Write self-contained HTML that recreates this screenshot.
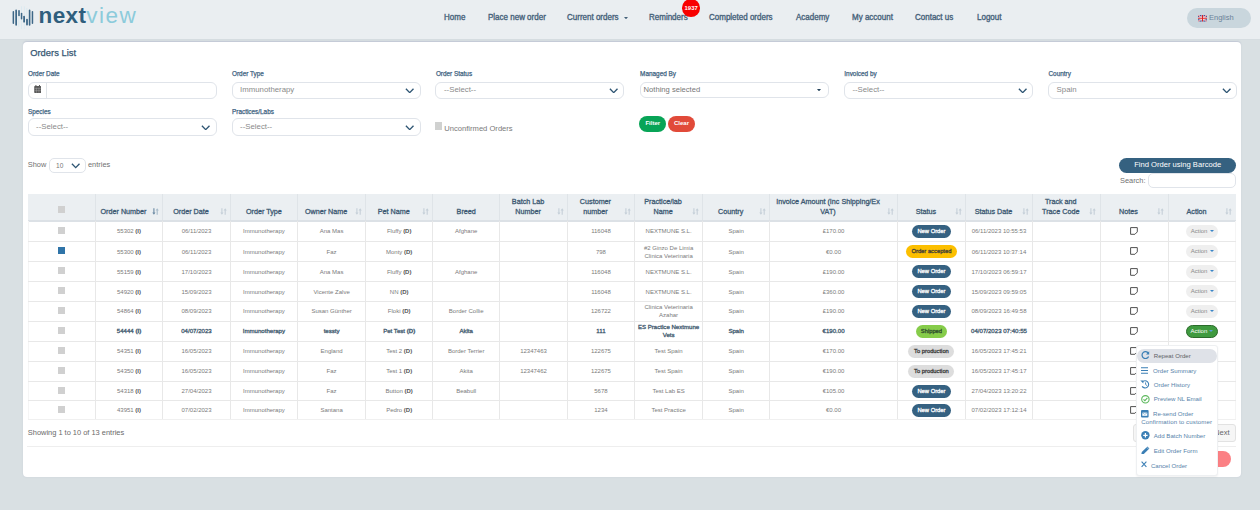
<!DOCTYPE html>
<html><head><meta charset="utf-8">
<style>
*{box-sizing:border-box;margin:0;padding:0}
html,body{width:1260px;height:510px;overflow:hidden}
body{background:#d9e0e3;font-family:"Liberation Sans",sans-serif;position:relative;color:#3b5a72}
.a{position:absolute;white-space:nowrap}
.hdr{position:absolute;left:0;top:0;width:1260px;height:39px;background:#eaeef1}
.nav{position:absolute;top:13.2px;font-size:8.4px;font-weight:normal;color:#46627a;line-height:9px;-webkit-text-stroke:0.35px #46627a;transform:scaleX(0.955);transform-origin:0 0}
.card{position:absolute;left:23px;top:42px;width:1218px;height:435px;background:#fff;border-radius:4px;box-shadow:0 -0.5px 1.5px rgba(90,90,150,0.18)}
.lbl{position:absolute;font-size:6.4px;font-weight:normal;color:#3f6482;line-height:7px;-webkit-text-stroke:0.25px #3f6482}
.inp{position:absolute;height:16.5px;border:1.2px solid #e0e4ea;border-radius:6px;background:#fff}
.sel .t{position:absolute;left:7.6px;top:0;font-size:7.8px;color:#8a8a8a;line-height:14.5px}
.chev{position:absolute;right:4.8px;top:5.4px;width:9.4px;height:5.5px}
table.g{position:absolute;left:5px;top:152px;border-collapse:collapse;table-layout:fixed;width:1208px}
table.g th{background:#ebeff2;height:27px;font-size:7px;font-weight:bold;color:#3d5a73;border-left:1px solid #e2e6ea;border-bottom:2px solid #d8dde2;text-align:center;vertical-align:bottom;padding:0 0 6px 0;line-height:8px;position:relative}
table.g th:first-child{border-left:none}
table.g td{height:20px;font-size:6px;color:#7b7b7b;border-left:1px solid #e6e6e6;border-bottom:1px solid #e6e6e6;text-align:center;vertical-align:middle;line-height:8px;padding:0}
table.g td:first-child{border-left:none}
.cb{display:inline-block;width:7px;height:7px;background:#cfcfcf;vertical-align:middle}
.srt{position:absolute;right:6px;bottom:7px;width:7px;height:7px}
.hd{display:flex;align-items:flex-end;justify-content:center;text-align:center;font-size:7.2px;font-weight:normal;color:#3d5a73;line-height:9.5px;white-space:normal;-webkit-text-stroke:0.3px #3d5a73}
.cl{display:flex;align-items:center;justify-content:center;text-align:center;font-size:6px;color:#7b7b7b;line-height:8px;white-space:normal}
.cl b{color:#555}
.cl.b{font-weight:normal;color:#465d72;font-size:6.1px;-webkit-text-stroke:0.32px #465d72}
.cl.b b{color:#465d72}
.bdg{border-radius:7px;font-size:5.8px;font-weight:normal;text-align:center;line-height:13px;-webkit-text-stroke:0.28px currentColor}
.act{border-radius:7px;font-size:6px;text-align:center;line-height:13px}
.car{display:inline-block;border-left:2px solid transparent;border-right:2px solid transparent;border-top:2.3px solid #3a86c8;vertical-align:middle;margin-top:-1px;margin-left:0.5px}
.mi{font-size:6.1px;line-height:8px;color:#5783aa}
</style></head><body>
<div class="hdr">
  <!-- logo -->
  <svg class="a" style="left:0;top:0" width="40" height="32" viewBox="0 0 40 32"><g stroke="#cfe6ee" stroke-width="0.5"><path d="M21.5 6.3V29M24.4 6.3V29M18.7 16.8V27M26.8 8V18.8"/></g><g fill="#3d6787"><rect x="12.6" y="11.1" width="1.5" height="12.8" rx="0.75"/><rect x="15.3" y="9.6" width="1.7" height="16.1" rx="0.85"/><rect x="18.2" y="9.9" width="1.6" height="6.3" rx="0.8"/><rect x="20.8" y="12.7" width="1.5" height="6.9" rx="0.75"/><rect x="23.2" y="15.7" width="1.8" height="6.9" rx="0.9"/><rect x="26.1" y="18.8" width="1.8" height="6.6" rx="0.9"/><rect x="28.8" y="9.6" width="1.6" height="16.1" rx="0.8"/><rect x="31.7" y="11.1" width="1.5" height="12.8" rx="0.75"/></g></svg>
  <div class="a" style="left:38.6px;top:1.2px;font-size:22.5px;line-height:30px;font-weight:bold;color:#2f5e7d;letter-spacing:0.35px">next<span style="font-weight:normal;color:#8ccbdb;letter-spacing:1.45px">view</span></div>

  <div class="nav a" style="left:444px">Home</div>
  <div class="nav a" style="left:488px">Place new order</div>
  <div class="nav a" style="left:567px">Current orders</div><svg class="a" style="left:623.8px;top:16.6px" width="4" height="2.4" viewBox="0 0 4 2.4"><path d="M0 0H4L2 2.3Z" fill="#46627a"/></svg>
  <div class="nav a" style="left:649px">Reminders</div>
  <div class="a" style="left:682px;top:-1px;width:18.3px;height:17.6px;border-radius:50%;background:#f80000;color:#fff;font-size:5.9px;font-weight:bold;text-align:center;line-height:18.5px">1937</div>
  <div class="nav a" style="left:709px">Completed orders</div>
  <div class="nav a" style="left:796px">Academy</div>
  <div class="nav a" style="left:852px">My account</div>
  <div class="nav a" style="left:915px">Contact us</div>
  <div class="nav a" style="left:977px">Logout</div>
  <div class="a" style="left:1187px;top:7.5px;width:64px;height:20px;border-radius:10px;background:#c9d6dd"></div>
  <svg class="a" style="left:1198px;top:15px" width="9" height="6.5" viewBox="0 0 9 6.5"><rect width="9" height="6.5" fill="#2b3f8c"/><path d="M0 0L9 6.5M9 0L0 6.5" stroke="#fff" stroke-width="1.4"/><path d="M0 0L9 6.5M9 0L0 6.5" stroke="#d22" stroke-width="0.5"/><path d="M4.5 0V6.5M0 3.25H9" stroke="#fff" stroke-width="2"/><path d="M4.5 0V6.5M0 3.25H9" stroke="#d22" stroke-width="1.1"/></svg>
  <div class="a" style="left:1209px;top:12.7px;font-size:7.5px;color:#6a8298;line-height:9px">English</div>
</div>
<div class="a" style="left:0;top:39px;width:1260px;height:1px;background:#d6dde1"></div>

<div class="card">
  <div class="a" style="left:7.2px;top:5px;font-size:9.4px;color:#355672;line-height:12px;-webkit-text-stroke:0.25px #355672">Orders List</div>
<!--FILT-->
<div class="lbl" style="left:5.0px;top:28.3px">Order Date</div>
<div class="inp" style="left:4.5px;top:39.5px;width:189.5px;height:17px"><div style="position:absolute;left:0;top:0;width:18.3px;height:100%;border-right:1.2px solid #e0e4e8"></div><svg style="position:absolute;left:5.6px;top:2.6px" width="7.4" height="8" viewBox="0 0 7.4 8"><rect x="0.2" y="1" width="7" height="7" rx="0.8" fill="#5a5a5a"/><path d="M0.5 3.4H6.9M0.5 5.6H6.9M2.5 2.6V7.8M4.9 2.6V7.8" stroke="#a8a8a8" stroke-width="0.45"/><rect x="1.4" y="0" width="1" height="1.8" fill="#5a5a5a"/><rect x="5" y="0" width="1" height="1.8" fill="#5a5a5a"/></svg></div>
<div class="lbl" style="left:209.0px;top:28.3px">Order Type</div>
<div class="inp sel" style="left:208.5px;top:39.5px;width:189px;height:17px"><div class="t">Immunotherapy</div><svg class="chev" viewBox="0 0 9 5.5"><path d="M0.7 0.7L4.5 4.6L8.3 0.7" fill="none" stroke="#2e5573" stroke-width="1.35"/></svg></div>
<div class="lbl" style="left:412.9px;top:28.3px">Order Status</div>
<div class="inp sel" style="left:412.4px;top:39.5px;width:189px;height:17px"><div class="t">--Select--</div><svg class="chev" viewBox="0 0 9 5.5"><path d="M0.7 0.7L4.5 4.6L8.3 0.7" fill="none" stroke="#2e5573" stroke-width="1.35"/></svg></div>
<div class="lbl" style="left:617.1px;top:28.3px">Managed By</div>
<div class="inp sel" style="left:616.6px;top:39.5px;width:189px;height:16px"><div class="t" style="left:3px;line-height:14px;font-size:7.6px;color:#777">Nothing selected</div><svg style="position:absolute;right:6.2px;top:6.3px" width="4" height="2.6" viewBox="0 0 4 2.6"><path d="M0 0H4L2 2.4Z" fill="#26445c"/></svg></div>
<div class="lbl" style="left:821.3px;top:28.3px">Invoiced by</div>
<div class="inp sel" style="left:820.8px;top:39.5px;width:189px;height:17px"><div class="t">--Select--</div><svg class="chev" viewBox="0 0 9 5.5"><path d="M0.7 0.7L4.5 4.6L8.3 0.7" fill="none" stroke="#2e5573" stroke-width="1.35"/></svg></div>
<div class="lbl" style="left:1025.5px;top:28.3px">Country</div>
<div class="inp sel" style="left:1025px;top:39.5px;width:189px;height:17px"><div class="t">Spain</div><svg class="chev" viewBox="0 0 9 5.5"><path d="M0.7 0.7L4.5 4.6L8.3 0.7" fill="none" stroke="#2e5573" stroke-width="1.35"/></svg></div>
<div class="lbl" style="left:5.0px;top:65.5px">Species</div>
<div class="inp sel" style="left:4.5px;top:76.3px;width:189px;height:17.5px"><div class="t" style="line-height:15px">--Select--</div><svg class="chev" viewBox="0 0 9 5.5"><path d="M0.7 0.7L4.5 4.6L8.3 0.7" fill="none" stroke="#2e5573" stroke-width="1.35"/></svg></div>
<div class="lbl" style="left:209.0px;top:65.5px">Practices/Labs</div>
<div class="inp sel" style="left:208.5px;top:76.3px;width:189px;height:17.5px"><div class="t" style="line-height:15px">--Select--</div><svg class="chev" viewBox="0 0 9 5.5"><path d="M0.7 0.7L4.5 4.6L8.3 0.7" fill="none" stroke="#2e5573" stroke-width="1.35"/></svg></div>
<div class="a" style="left:412px;top:80.1px;width:7px;height:8px;background:#d0d1d0"></div>
<div class="a" style="left:421.3px;top:81.7px;font-size:7.6px;line-height:9px;color:#7a7a7a">Unconfirmed Orders</div>
<div class="a btn" style="left:616.4px;top:74.2px;width:26.7px;height:15.6px;border-radius:8px;background:#08a457;color:#fff;font-size:6px;font-weight:bold;text-align:center;line-height:14px">Filter</div>
<div class="a btn" style="left:645.1px;top:74.2px;width:26.8px;height:15.6px;border-radius:8px;background:#e14a39;color:#fff;font-size:6px;font-weight:bold;text-align:center;line-height:14px">Clear</div>
<div class="a" style="left:4.8px;top:117.6px;font-size:7.4px;line-height:9px;color:#6f6f6f">Show</div>
<div class="inp" style="left:26px;top:115.8px;width:36.7px;height:14.8px;border-radius:5px"><div style="position:absolute;left:6px;top:3px;font-size:6.6px;line-height:7px;color:#777">10</div><svg class="chev" style="right:4.4px;top:4.4px" viewBox="0 0 9 5.5"><path d="M0.7 0.7L4.5 4.6L8.3 0.7" fill="none" stroke="#2e5573" stroke-width="1.35"/></svg></div>
<div class="a" style="left:65px;top:117.6px;font-size:7.4px;line-height:9px;color:#6f6f6f">entries</div>
<div class="a" style="left:1096px;top:115.8px;width:117.3px;height:15.2px;border-radius:8px;background:#356180;color:#fff;font-size:7.6px;text-align:center;line-height:13.4px">Find Order using Barcode</div>
<div class="a" style="left:1097px;top:133.5px;font-size:7.4px;line-height:9px;color:#6f6f6f">Search:</div>
<div class="inp" style="left:1125.4px;top:131px;width:88px;height:14.8px;border-radius:5px"></div>
<!--/FILT-->






<!--TABLE-->
<div class="a" style="left:5px;top:152px;width:1208px;height:27.30000000000001px;background:#ebeff2"></div>
<div class="a" style="left:5px;top:177.8px;width:1208px;height:1.8px;background:#dce1e6"></div>
<div class="a" style="left:71.8px;top:152px;width:1.2px;height:26.30000000000001px;background:#dfe4e8"></div>
<div class="a" style="left:71.8px;top:179.3px;width:1px;height:198.5px;background:#e8e8e8"></div>
<div class="a" style="left:139.2px;top:152px;width:1.2px;height:26.30000000000001px;background:#dfe4e8"></div>
<div class="a" style="left:139.2px;top:179.3px;width:1px;height:198.5px;background:#e8e8e8"></div>
<div class="a" style="left:206.8px;top:152px;width:1.2px;height:26.30000000000001px;background:#dfe4e8"></div>
<div class="a" style="left:206.8px;top:179.3px;width:1px;height:198.5px;background:#e8e8e8"></div>
<div class="a" style="left:274.0px;top:152px;width:1.2px;height:26.30000000000001px;background:#dfe4e8"></div>
<div class="a" style="left:274.0px;top:179.3px;width:1px;height:198.5px;background:#e8e8e8"></div>
<div class="a" style="left:342.2px;top:152px;width:1.2px;height:26.30000000000001px;background:#dfe4e8"></div>
<div class="a" style="left:342.2px;top:179.3px;width:1px;height:198.5px;background:#e8e8e8"></div>
<div class="a" style="left:409.2px;top:152px;width:1.2px;height:26.30000000000001px;background:#dfe4e8"></div>
<div class="a" style="left:409.2px;top:179.3px;width:1px;height:198.5px;background:#e8e8e8"></div>
<div class="a" style="left:476.2px;top:152px;width:1.2px;height:26.30000000000001px;background:#dfe4e8"></div>
<div class="a" style="left:476.2px;top:179.3px;width:1px;height:198.5px;background:#e8e8e8"></div>
<div class="a" style="left:543.9px;top:152px;width:1.2px;height:26.30000000000001px;background:#dfe4e8"></div>
<div class="a" style="left:543.9px;top:179.3px;width:1px;height:198.5px;background:#e8e8e8"></div>
<div class="a" style="left:611.0px;top:152px;width:1.2px;height:26.30000000000001px;background:#dfe4e8"></div>
<div class="a" style="left:611.0px;top:179.3px;width:1px;height:198.5px;background:#e8e8e8"></div>
<div class="a" style="left:679.2px;top:152px;width:1.2px;height:26.30000000000001px;background:#dfe4e8"></div>
<div class="a" style="left:679.2px;top:179.3px;width:1px;height:198.5px;background:#e8e8e8"></div>
<div class="a" style="left:746.2px;top:152px;width:1.2px;height:26.30000000000001px;background:#dfe4e8"></div>
<div class="a" style="left:746.2px;top:179.3px;width:1px;height:198.5px;background:#e8e8e8"></div>
<div class="a" style="left:873.9px;top:152px;width:1.2px;height:26.30000000000001px;background:#dfe4e8"></div>
<div class="a" style="left:873.9px;top:179.3px;width:1px;height:198.5px;background:#e8e8e8"></div>
<div class="a" style="left:942.0px;top:152px;width:1.2px;height:26.30000000000001px;background:#dfe4e8"></div>
<div class="a" style="left:942.0px;top:179.3px;width:1px;height:198.5px;background:#e8e8e8"></div>
<div class="a" style="left:1009.0px;top:152px;width:1.2px;height:26.30000000000001px;background:#dfe4e8"></div>
<div class="a" style="left:1009.0px;top:179.3px;width:1px;height:198.5px;background:#e8e8e8"></div>
<div class="a" style="left:1076.5px;top:152px;width:1.2px;height:26.30000000000001px;background:#dfe4e8"></div>
<div class="a" style="left:1076.5px;top:179.3px;width:1px;height:198.5px;background:#e8e8e8"></div>
<div class="a" style="left:1144.5px;top:152px;width:1.2px;height:26.30000000000001px;background:#dfe4e8"></div>
<div class="a" style="left:1144.5px;top:179.3px;width:1px;height:198.5px;background:#e8e8e8"></div>
<div class="a" style="left:5px;top:179.3px;width:1px;height:198.5px;background:#f5f5f5"></div>
<div class="a" style="left:1212px;top:179.3px;width:1px;height:198.5px;background:#f5f5f5"></div>
<div class="a" style="left:5px;top:198.9px;width:1208px;height:1px;background:#e8e8e8"></div>
<div class="a" style="left:5px;top:219.2px;width:1208px;height:1px;background:#e8e8e8"></div>
<div class="a" style="left:5px;top:239.0px;width:1208px;height:1px;background:#e8e8e8"></div>
<div class="a" style="left:5px;top:259.0px;width:1208px;height:1px;background:#e8e8e8"></div>
<div class="a" style="left:5px;top:278.9px;width:1208px;height:1px;background:#e8e8e8"></div>
<div class="a" style="left:5px;top:299.0px;width:1208px;height:1px;background:#e8e8e8"></div>
<div class="a" style="left:5px;top:318.9px;width:1208px;height:1px;background:#e8e8e8"></div>
<div class="a" style="left:5px;top:338.9px;width:1208px;height:1px;background:#e8e8e8"></div>
<div class="a" style="left:5px;top:358.0px;width:1208px;height:1px;background:#e8e8e8"></div>
<div class="a" style="left:5px;top:377.3px;width:1208px;height:1px;background:#f0f0f0"></div>
<div class="a" style="left:35.15px;top:164.3px;width:7px;height:7px;background:#d0d0d0"></div>
<div class="a hd" style="left:72.3px;width:56.39999999999999px;top:152px;height:22.30000000000001px">Order Number</div>
<svg class="a" style="left:128.89999999999998px;top:166.0px" width="7" height="7" viewBox="0 0 7 7"><path d="M1.9 0.2V5.6" stroke="#6e8ca5" stroke-width="1.15"/><path d="M0.3 4.4L1.9 6.8L3.5 4.4Z" fill="#6e8ca5"/><path d="M5.2 6.8V1.4" stroke="#a9bccb" stroke-width="1.15"/><path d="M3.6 2.6L5.2 0.2L6.8 2.6Z" fill="#a9bccb"/></svg>
<div class="a hd" style="left:139.7px;width:56.60000000000002px;top:152px;height:22.30000000000001px">Order Date</div>
<svg class="a" style="left:196.5px;top:166.0px" width="7" height="7" viewBox="0 0 7 7"><path d="M1.9 0.2V5.6" stroke="#c6d0d9" stroke-width="1.15"/><path d="M0.3 4.4L1.9 6.8L3.5 4.4Z" fill="#c6d0d9"/><path d="M5.2 6.8V1.4" stroke="#c6d0d9" stroke-width="1.15"/><path d="M3.6 2.6L5.2 0.2L6.8 2.6Z" fill="#c6d0d9"/></svg>
<div class="a hd" style="left:207.3px;width:67.19999999999999px;top:152px;height:22.30000000000001px">Order Type</div>
<div class="a hd" style="left:274.5px;width:57.19999999999999px;top:152px;height:22.30000000000001px">Owner Name</div>
<svg class="a" style="left:331.9px;top:166.0px" width="7" height="7" viewBox="0 0 7 7"><path d="M1.9 0.2V5.6" stroke="#c6d0d9" stroke-width="1.15"/><path d="M0.3 4.4L1.9 6.8L3.5 4.4Z" fill="#c6d0d9"/><path d="M5.2 6.8V1.4" stroke="#c6d0d9" stroke-width="1.15"/><path d="M3.6 2.6L5.2 0.2L6.8 2.6Z" fill="#c6d0d9"/></svg>
<div class="a hd" style="left:342.7px;width:56.0px;top:152px;height:22.30000000000001px">Pet Name</div>
<svg class="a" style="left:398.9px;top:166.0px" width="7" height="7" viewBox="0 0 7 7"><path d="M1.9 0.2V5.6" stroke="#c6d0d9" stroke-width="1.15"/><path d="M0.3 4.4L1.9 6.8L3.5 4.4Z" fill="#c6d0d9"/><path d="M5.2 6.8V1.4" stroke="#c6d0d9" stroke-width="1.15"/><path d="M3.6 2.6L5.2 0.2L6.8 2.6Z" fill="#c6d0d9"/></svg>
<div class="a hd" style="left:409.7px;width:67.0px;top:152px;height:22.30000000000001px">Breed</div>
<div class="a hd" style="left:476.7px;width:56.69999999999999px;top:152px;height:22.30000000000001px">Batch Lab<br>Number</div>
<svg class="a" style="left:533.6px;top:166.0px" width="7" height="7" viewBox="0 0 7 7"><path d="M1.9 0.2V5.6" stroke="#c6d0d9" stroke-width="1.15"/><path d="M0.3 4.4L1.9 6.8L3.5 4.4Z" fill="#c6d0d9"/><path d="M5.2 6.8V1.4" stroke="#c6d0d9" stroke-width="1.15"/><path d="M3.6 2.6L5.2 0.2L6.8 2.6Z" fill="#c6d0d9"/></svg>
<div class="a hd" style="left:544.4px;width:56.10000000000002px;top:152px;height:22.30000000000001px">Customer<br>number</div>
<svg class="a" style="left:600.7px;top:166.0px" width="7" height="7" viewBox="0 0 7 7"><path d="M1.9 0.2V5.6" stroke="#c6d0d9" stroke-width="1.15"/><path d="M0.3 4.4L1.9 6.8L3.5 4.4Z" fill="#c6d0d9"/><path d="M5.2 6.8V1.4" stroke="#c6d0d9" stroke-width="1.15"/><path d="M3.6 2.6L5.2 0.2L6.8 2.6Z" fill="#c6d0d9"/></svg>
<div class="a hd" style="left:611.5px;width:57.200000000000045px;top:152px;height:22.30000000000001px">Practice/lab<br>Name</div>
<svg class="a" style="left:668.9000000000001px;top:166.0px" width="7" height="7" viewBox="0 0 7 7"><path d="M1.9 0.2V5.6" stroke="#c6d0d9" stroke-width="1.15"/><path d="M0.3 4.4L1.9 6.8L3.5 4.4Z" fill="#c6d0d9"/><path d="M5.2 6.8V1.4" stroke="#c6d0d9" stroke-width="1.15"/><path d="M3.6 2.6L5.2 0.2L6.8 2.6Z" fill="#c6d0d9"/></svg>
<div class="a hd" style="left:679.7px;width:56.0px;top:152px;height:22.30000000000001px">Country</div>
<svg class="a" style="left:735.9000000000001px;top:166.0px" width="7" height="7" viewBox="0 0 7 7"><path d="M1.9 0.2V5.6" stroke="#c6d0d9" stroke-width="1.15"/><path d="M0.3 4.4L1.9 6.8L3.5 4.4Z" fill="#c6d0d9"/><path d="M5.2 6.8V1.4" stroke="#c6d0d9" stroke-width="1.15"/><path d="M3.6 2.6L5.2 0.2L6.8 2.6Z" fill="#c6d0d9"/></svg>
<div class="a hd" style="left:746.7px;width:116.69999999999993px;top:152px;height:22.30000000000001px">Invoice Amount (Inc Shipping/Ex<br>VAT)</div>
<svg class="a" style="left:863.6px;top:166.0px" width="7" height="7" viewBox="0 0 7 7"><path d="M1.9 0.2V5.6" stroke="#c6d0d9" stroke-width="1.15"/><path d="M0.3 4.4L1.9 6.8L3.5 4.4Z" fill="#c6d0d9"/><path d="M5.2 6.8V1.4" stroke="#c6d0d9" stroke-width="1.15"/><path d="M3.6 2.6L5.2 0.2L6.8 2.6Z" fill="#c6d0d9"/></svg>
<div class="a hd" style="left:874.4px;width:57.10000000000002px;top:152px;height:22.30000000000001px">Status</div>
<svg class="a" style="left:931.7px;top:166.0px" width="7" height="7" viewBox="0 0 7 7"><path d="M1.9 0.2V5.6" stroke="#c6d0d9" stroke-width="1.15"/><path d="M0.3 4.4L1.9 6.8L3.5 4.4Z" fill="#c6d0d9"/><path d="M5.2 6.8V1.4" stroke="#c6d0d9" stroke-width="1.15"/><path d="M3.6 2.6L5.2 0.2L6.8 2.6Z" fill="#c6d0d9"/></svg>
<div class="a hd" style="left:942.5px;width:56.0px;top:152px;height:22.30000000000001px">Status Date</div>
<svg class="a" style="left:998.7px;top:166.0px" width="7" height="7" viewBox="0 0 7 7"><path d="M1.9 0.2V5.6" stroke="#c6d0d9" stroke-width="1.15"/><path d="M0.3 4.4L1.9 6.8L3.5 4.4Z" fill="#c6d0d9"/><path d="M5.2 6.8V1.4" stroke="#c6d0d9" stroke-width="1.15"/><path d="M3.6 2.6L5.2 0.2L6.8 2.6Z" fill="#c6d0d9"/></svg>
<div class="a hd" style="left:1009.5px;width:56.5px;top:152px;height:22.30000000000001px">Track and<br>Trace Code</div>
<svg class="a" style="left:1066.2px;top:166.0px" width="7" height="7" viewBox="0 0 7 7"><path d="M1.9 0.2V5.6" stroke="#c6d0d9" stroke-width="1.15"/><path d="M0.3 4.4L1.9 6.8L3.5 4.4Z" fill="#c6d0d9"/><path d="M5.2 6.8V1.4" stroke="#c6d0d9" stroke-width="1.15"/><path d="M3.6 2.6L5.2 0.2L6.8 2.6Z" fill="#c6d0d9"/></svg>
<div class="a hd" style="left:1077px;width:57px;top:152px;height:22.30000000000001px">Notes</div>
<svg class="a" style="left:1134.2px;top:166.0px" width="7" height="7" viewBox="0 0 7 7"><path d="M1.9 0.2V5.6" stroke="#c6d0d9" stroke-width="1.15"/><path d="M0.3 4.4L1.9 6.8L3.5 4.4Z" fill="#c6d0d9"/><path d="M5.2 6.8V1.4" stroke="#c6d0d9" stroke-width="1.15"/><path d="M3.6 2.6L5.2 0.2L6.8 2.6Z" fill="#c6d0d9"/></svg>
<div class="a hd" style="left:1145px;width:57px;top:152px;height:22.30000000000001px">Action</div>
<svg class="a" style="left:1202.2px;top:166.0px" width="7" height="7" viewBox="0 0 7 7"><path d="M1.9 0.2V5.6" stroke="#c6d0d9" stroke-width="1.15"/><path d="M0.3 4.4L1.9 6.8L3.5 4.4Z" fill="#c6d0d9"/><path d="M5.2 6.8V1.4" stroke="#c6d0d9" stroke-width="1.15"/><path d="M3.6 2.6L5.2 0.2L6.8 2.6Z" fill="#c6d0d9"/></svg>
<div class="a" style="left:35.15px;top:184.5px;width:7px;height:7px;background:#d0d0d0"></div>
<div class="a cl" style="left:72.3px;width:67.39999999999999px;top:179.3px;height:20.099999999999994px"><span>55302 <b>(I)</b></span></div>
<div class="a cl" style="left:139.7px;width:67.60000000000002px;top:179.3px;height:20.099999999999994px"><span>06/11/2023</span></div>
<div class="a cl" style="left:207.3px;width:67.19999999999999px;top:179.3px;height:20.099999999999994px"><span>Immunotherapy</span></div>
<div class="a cl" style="left:274.5px;width:68.19999999999999px;top:179.3px;height:20.099999999999994px"><span>Ana Mas</span></div>
<div class="a cl" style="left:342.7px;width:67.0px;top:179.3px;height:20.099999999999994px"><span>Fluffy <b>(D)</b></span></div>
<div class="a cl" style="left:409.7px;width:67.0px;top:179.3px;height:20.099999999999994px"><span>Afghane</span></div>
<div class="a cl" style="left:544.4px;width:67.10000000000002px;top:179.3px;height:20.099999999999994px"><span>116048</span></div>
<div class="a cl" style="left:611.5px;width:68.20000000000005px;top:179.3px;height:20.099999999999994px"><span>NEXTMUNE S.L.</span></div>
<div class="a cl" style="left:679.7px;width:67.0px;top:179.3px;height:20.099999999999994px"><span>Spain</span></div>
<div class="a cl" style="left:746.7px;width:127.69999999999993px;top:179.3px;height:20.099999999999994px"><span>£170.00</span></div>
<div class="a cl" style="left:942.5px;width:67.0px;top:179.3px;height:20.099999999999994px"><span>06/11/2023 10:55:53</span></div>
<div class="a bdg" style="left:889.1500000000001px;top:183.0px;width:38.6px;height:13px;background:#356181;color:#fff">New Order</div>
<svg class="a" style="left:1107.3px;top:185.10000000000002px" width="8" height="8" viewBox="0 0 8 8"><path d="M0.6 0.6H7.3V4.9L4.9 7.3H0.6Z" fill="none" stroke="#505050" stroke-width="1"/></svg>
<div class="a act" style="left:1163px;top:183.0px;width:32.4px;height:13.2px;background:#efefef;color:#8a8a8a">Action <span class="car"></span></div>
<div class="a" style="left:35.15px;top:204.6px;width:7px;height:7px;background:#2f74a8"></div>
<div class="a cl" style="left:72.3px;width:67.39999999999999px;top:199.4px;height:20.299999999999983px"><span>55300 <b>(I)</b></span></div>
<div class="a cl" style="left:139.7px;width:67.60000000000002px;top:199.4px;height:20.299999999999983px"><span>06/11/2023</span></div>
<div class="a cl" style="left:207.3px;width:67.19999999999999px;top:199.4px;height:20.299999999999983px"><span>Immunotherapy</span></div>
<div class="a cl" style="left:274.5px;width:68.19999999999999px;top:199.4px;height:20.299999999999983px"><span>Faz</span></div>
<div class="a cl" style="left:342.7px;width:67.0px;top:199.4px;height:20.299999999999983px"><span>Monty <b>(D)</b></span></div>
<div class="a cl" style="left:544.4px;width:67.10000000000002px;top:199.4px;height:20.299999999999983px"><span>798</span></div>
<div class="a cl" style="left:611.5px;width:68.20000000000005px;top:199.4px;height:20.299999999999983px"><span>#2 Ginzo De Limia<br>Clinica Veterinaria</span></div>
<div class="a cl" style="left:679.7px;width:67.0px;top:199.4px;height:20.299999999999983px"><span>Spain</span></div>
<div class="a cl" style="left:746.7px;width:127.69999999999993px;top:199.4px;height:20.299999999999983px"><span>€0.00</span></div>
<div class="a cl" style="left:942.5px;width:67.0px;top:199.4px;height:20.299999999999983px"><span>06/11/2023 10:37:14</span></div>
<div class="a bdg" style="left:883.1px;top:203.1px;width:50.7px;height:13px;background:#fcbf00;color:#3a3a3a">Order accepted</div>
<svg class="a" style="left:1107.3px;top:205.20000000000002px" width="8" height="8" viewBox="0 0 8 8"><path d="M0.6 0.6H7.3V4.9L4.9 7.3H0.6Z" fill="none" stroke="#505050" stroke-width="1"/></svg>
<div class="a act" style="left:1163px;top:203.1px;width:32.4px;height:13.2px;background:#efefef;color:#8a8a8a">Action <span class="car"></span></div>
<div class="a" style="left:35.15px;top:224.89999999999998px;width:7px;height:7px;background:#d0d0d0"></div>
<div class="a cl" style="left:72.3px;width:67.39999999999999px;top:219.7px;height:19.80000000000001px"><span>55159 <b>(I)</b></span></div>
<div class="a cl" style="left:139.7px;width:67.60000000000002px;top:219.7px;height:19.80000000000001px"><span>17/10/2023</span></div>
<div class="a cl" style="left:207.3px;width:67.19999999999999px;top:219.7px;height:19.80000000000001px"><span>Immunotherapy</span></div>
<div class="a cl" style="left:274.5px;width:68.19999999999999px;top:219.7px;height:19.80000000000001px"><span>Ana Mas</span></div>
<div class="a cl" style="left:342.7px;width:67.0px;top:219.7px;height:19.80000000000001px"><span>Fluffy <b>(D)</b></span></div>
<div class="a cl" style="left:409.7px;width:67.0px;top:219.7px;height:19.80000000000001px"><span>Afghane</span></div>
<div class="a cl" style="left:544.4px;width:67.10000000000002px;top:219.7px;height:19.80000000000001px"><span>116048</span></div>
<div class="a cl" style="left:611.5px;width:68.20000000000005px;top:219.7px;height:19.80000000000001px"><span>NEXTMUNE S.L.</span></div>
<div class="a cl" style="left:679.7px;width:67.0px;top:219.7px;height:19.80000000000001px"><span>Spain</span></div>
<div class="a cl" style="left:746.7px;width:127.69999999999993px;top:219.7px;height:19.80000000000001px"><span>£190.00</span></div>
<div class="a cl" style="left:942.5px;width:67.0px;top:219.7px;height:19.80000000000001px"><span>17/10/2023 06:59:17</span></div>
<div class="a bdg" style="left:889.1500000000001px;top:223.39999999999998px;width:38.6px;height:13px;background:#356181;color:#fff">New Order</div>
<svg class="a" style="left:1107.3px;top:225.5px" width="8" height="8" viewBox="0 0 8 8"><path d="M0.6 0.6H7.3V4.9L4.9 7.3H0.6Z" fill="none" stroke="#505050" stroke-width="1"/></svg>
<div class="a act" style="left:1163px;top:223.39999999999998px;width:32.4px;height:13.2px;background:#efefef;color:#8a8a8a">Action <span class="car"></span></div>
<div class="a" style="left:35.15px;top:244.7px;width:7px;height:7px;background:#d0d0d0"></div>
<div class="a cl" style="left:72.3px;width:67.39999999999999px;top:239.5px;height:20.0px"><span>54920 <b>(I)</b></span></div>
<div class="a cl" style="left:139.7px;width:67.60000000000002px;top:239.5px;height:20.0px"><span>15/09/2023</span></div>
<div class="a cl" style="left:207.3px;width:67.19999999999999px;top:239.5px;height:20.0px"><span>Immunotherapy</span></div>
<div class="a cl" style="left:274.5px;width:68.19999999999999px;top:239.5px;height:20.0px"><span>Vicente Zalve</span></div>
<div class="a cl" style="left:342.7px;width:67.0px;top:239.5px;height:20.0px"><span>NN <b>(D)</b></span></div>
<div class="a cl" style="left:544.4px;width:67.10000000000002px;top:239.5px;height:20.0px"><span>116048</span></div>
<div class="a cl" style="left:611.5px;width:68.20000000000005px;top:239.5px;height:20.0px"><span>NEXTMUNE S.L.</span></div>
<div class="a cl" style="left:679.7px;width:67.0px;top:239.5px;height:20.0px"><span>Spain</span></div>
<div class="a cl" style="left:746.7px;width:127.69999999999993px;top:239.5px;height:20.0px"><span>£360.00</span></div>
<div class="a cl" style="left:942.5px;width:67.0px;top:239.5px;height:20.0px"><span>15/09/2023 09:59:05</span></div>
<div class="a bdg" style="left:889.1500000000001px;top:243.2px;width:38.6px;height:13px;background:#356181;color:#fff">New Order</div>
<svg class="a" style="left:1107.3px;top:245.3px" width="8" height="8" viewBox="0 0 8 8"><path d="M0.6 0.6H7.3V4.9L4.9 7.3H0.6Z" fill="none" stroke="#505050" stroke-width="1"/></svg>
<div class="a act" style="left:1163px;top:243.2px;width:32.4px;height:13.2px;background:#efefef;color:#8a8a8a">Action <span class="car"></span></div>
<div class="a" style="left:35.15px;top:264.7px;width:7px;height:7px;background:#d0d0d0"></div>
<div class="a cl" style="left:72.3px;width:67.39999999999999px;top:259.5px;height:19.899999999999977px"><span>54864 <b>(I)</b></span></div>
<div class="a cl" style="left:139.7px;width:67.60000000000002px;top:259.5px;height:19.899999999999977px"><span>08/09/2023</span></div>
<div class="a cl" style="left:207.3px;width:67.19999999999999px;top:259.5px;height:19.899999999999977px"><span>Immunotherapy</span></div>
<div class="a cl" style="left:274.5px;width:68.19999999999999px;top:259.5px;height:19.899999999999977px"><span>Susan Günther</span></div>
<div class="a cl" style="left:342.7px;width:67.0px;top:259.5px;height:19.899999999999977px"><span>Floki <b>(D)</b></span></div>
<div class="a cl" style="left:409.7px;width:67.0px;top:259.5px;height:19.899999999999977px"><span>Border Collie</span></div>
<div class="a cl" style="left:544.4px;width:67.10000000000002px;top:259.5px;height:19.899999999999977px"><span>126722</span></div>
<div class="a cl" style="left:611.5px;width:68.20000000000005px;top:259.5px;height:19.899999999999977px"><span>Clinica Veterinaria<br>Azahar</span></div>
<div class="a cl" style="left:679.7px;width:67.0px;top:259.5px;height:19.899999999999977px"><span>Spain</span></div>
<div class="a cl" style="left:746.7px;width:127.69999999999993px;top:259.5px;height:19.899999999999977px"><span>£190.00</span></div>
<div class="a cl" style="left:942.5px;width:67.0px;top:259.5px;height:19.899999999999977px"><span>08/09/2023 16:49:58</span></div>
<div class="a bdg" style="left:889.1500000000001px;top:263.2px;width:38.6px;height:13px;background:#356181;color:#fff">New Order</div>
<svg class="a" style="left:1107.3px;top:265.3px" width="8" height="8" viewBox="0 0 8 8"><path d="M0.6 0.6H7.3V4.9L4.9 7.3H0.6Z" fill="none" stroke="#505050" stroke-width="1"/></svg>
<div class="a act" style="left:1163px;top:263.2px;width:32.4px;height:13.2px;background:#efefef;color:#8a8a8a">Action <span class="car"></span></div>
<div class="a" style="left:35.15px;top:284.59999999999997px;width:7px;height:7px;background:#d0d0d0"></div>
<div class="a cl b" style="left:72.3px;width:67.39999999999999px;top:279.4px;height:20.100000000000023px"><span>54444 <b>(I)</b></span></div>
<div class="a cl b" style="left:139.7px;width:67.60000000000002px;top:279.4px;height:20.100000000000023px"><span>04/07/2023</span></div>
<div class="a cl b" style="left:207.3px;width:67.19999999999999px;top:279.4px;height:20.100000000000023px"><span>Immunotherapy</span></div>
<div class="a cl b" style="left:274.5px;width:68.19999999999999px;top:279.4px;height:20.100000000000023px"><span>tessty</span></div>
<div class="a cl b" style="left:342.7px;width:67.0px;top:279.4px;height:20.100000000000023px"><span>Pet Test <b>(D)</b></span></div>
<div class="a cl b" style="left:409.7px;width:67.0px;top:279.4px;height:20.100000000000023px"><span>Akita</span></div>
<div class="a cl b" style="left:544.4px;width:67.10000000000002px;top:279.4px;height:20.100000000000023px"><span>111</span></div>
<div class="a cl b" style="left:611.5px;width:68.20000000000005px;top:279.4px;height:20.100000000000023px"><span>ES Practice Nextmune<br>Vets</span></div>
<div class="a cl b" style="left:679.7px;width:67.0px;top:279.4px;height:20.100000000000023px"><span>Spain</span></div>
<div class="a cl b" style="left:746.7px;width:127.69999999999993px;top:279.4px;height:20.100000000000023px"><span>€190.00</span></div>
<div class="a cl b" style="left:942.5px;width:67.0px;top:279.4px;height:20.100000000000023px"><span>04/07/2023 07:40:55</span></div>
<div class="a bdg" style="left:892.95px;top:283.09999999999997px;width:31px;height:13px;background:#86cc4a;color:#2d4a2d">Shipped</div>
<svg class="a" style="left:1107.3px;top:285.2px" width="8" height="8" viewBox="0 0 8 8"><path d="M0.6 0.6H7.3V4.9L4.9 7.3H0.6Z" fill="none" stroke="#505050" stroke-width="1"/></svg>
<div class="a act" style="left:1162.7px;top:283.29999999999995px;width:32.6px;height:13.2px;background:#3f9a3f;border:1px solid #2b6b2b;color:#fff;line-height:11.2px">Action <span class="car" style="border-top-color:#5aa0d8"></span></div>
<div class="a" style="left:35.15px;top:304.7px;width:7px;height:7px;background:#d0d0d0"></div>
<div class="a cl" style="left:72.3px;width:67.39999999999999px;top:299.5px;height:19.899999999999977px"><span>54351 <b>(I)</b></span></div>
<div class="a cl" style="left:139.7px;width:67.60000000000002px;top:299.5px;height:19.899999999999977px"><span>16/05/2023</span></div>
<div class="a cl" style="left:207.3px;width:67.19999999999999px;top:299.5px;height:19.899999999999977px"><span>Immunotherapy</span></div>
<div class="a cl" style="left:274.5px;width:68.19999999999999px;top:299.5px;height:19.899999999999977px"><span>England</span></div>
<div class="a cl" style="left:342.7px;width:67.0px;top:299.5px;height:19.899999999999977px"><span>Test 2 <b>(D)</b></span></div>
<div class="a cl" style="left:409.7px;width:67.0px;top:299.5px;height:19.899999999999977px"><span>Border Terrier</span></div>
<div class="a cl" style="left:476.7px;width:67.69999999999999px;top:299.5px;height:19.899999999999977px"><span>12347463</span></div>
<div class="a cl" style="left:544.4px;width:67.10000000000002px;top:299.5px;height:19.899999999999977px"><span>122675</span></div>
<div class="a cl" style="left:611.5px;width:68.20000000000005px;top:299.5px;height:19.899999999999977px"><span>Test Spain</span></div>
<div class="a cl" style="left:679.7px;width:67.0px;top:299.5px;height:19.899999999999977px"><span>Spain</span></div>
<div class="a cl" style="left:746.7px;width:127.69999999999993px;top:299.5px;height:19.899999999999977px"><span>€170.00</span></div>
<div class="a cl" style="left:942.5px;width:67.0px;top:299.5px;height:19.899999999999977px"><span>16/05/2023 17:45:21</span></div>
<div class="a bdg" style="left:885.45px;top:303.2px;width:46px;height:13px;background:#dddddd;color:#3a3a3a">To production</div>
<svg class="a" style="left:1107.3px;top:305.3px" width="8" height="8" viewBox="0 0 8 8"><path d="M0.6 0.6H7.3V4.9L4.9 7.3H0.6Z" fill="none" stroke="#505050" stroke-width="1"/></svg>
<div class="a act" style="left:1163px;top:303.2px;width:32.4px;height:13.2px;background:#efefef;color:#8a8a8a">Action <span class="car"></span></div>
<div class="a" style="left:35.15px;top:324.59999999999997px;width:7px;height:7px;background:#d0d0d0"></div>
<div class="a cl" style="left:72.3px;width:67.39999999999999px;top:319.4px;height:20.0px"><span>54350 <b>(I)</b></span></div>
<div class="a cl" style="left:139.7px;width:67.60000000000002px;top:319.4px;height:20.0px"><span>16/05/2023</span></div>
<div class="a cl" style="left:207.3px;width:67.19999999999999px;top:319.4px;height:20.0px"><span>Immunotherapy</span></div>
<div class="a cl" style="left:274.5px;width:68.19999999999999px;top:319.4px;height:20.0px"><span>Faz</span></div>
<div class="a cl" style="left:342.7px;width:67.0px;top:319.4px;height:20.0px"><span>Test 1 <b>(D)</b></span></div>
<div class="a cl" style="left:409.7px;width:67.0px;top:319.4px;height:20.0px"><span>Akita</span></div>
<div class="a cl" style="left:476.7px;width:67.69999999999999px;top:319.4px;height:20.0px"><span>12347462</span></div>
<div class="a cl" style="left:544.4px;width:67.10000000000002px;top:319.4px;height:20.0px"><span>122675</span></div>
<div class="a cl" style="left:611.5px;width:68.20000000000005px;top:319.4px;height:20.0px"><span>Test Spain</span></div>
<div class="a cl" style="left:679.7px;width:67.0px;top:319.4px;height:20.0px"><span>Spain</span></div>
<div class="a cl" style="left:746.7px;width:127.69999999999993px;top:319.4px;height:20.0px"><span>€190.00</span></div>
<div class="a cl" style="left:942.5px;width:67.0px;top:319.4px;height:20.0px"><span>16/05/2023 17:45:17</span></div>
<div class="a bdg" style="left:885.45px;top:323.09999999999997px;width:46px;height:13px;background:#dddddd;color:#3a3a3a">To production</div>
<svg class="a" style="left:1107.3px;top:325.2px" width="8" height="8" viewBox="0 0 8 8"><path d="M0.6 0.6H7.3V4.9L4.9 7.3H0.6Z" fill="none" stroke="#505050" stroke-width="1"/></svg>
<div class="a act" style="left:1163px;top:323.09999999999997px;width:32.4px;height:13.2px;background:#efefef;color:#8a8a8a">Action <span class="car"></span></div>
<div class="a" style="left:35.15px;top:344.59999999999997px;width:7px;height:7px;background:#d0d0d0"></div>
<div class="a cl" style="left:72.3px;width:67.39999999999999px;top:339.4px;height:19.100000000000023px"><span>54318 <b>(I)</b></span></div>
<div class="a cl" style="left:139.7px;width:67.60000000000002px;top:339.4px;height:19.100000000000023px"><span>27/04/2023</span></div>
<div class="a cl" style="left:207.3px;width:67.19999999999999px;top:339.4px;height:19.100000000000023px"><span>Immunotherapy</span></div>
<div class="a cl" style="left:274.5px;width:68.19999999999999px;top:339.4px;height:19.100000000000023px"><span>Faz</span></div>
<div class="a cl" style="left:342.7px;width:67.0px;top:339.4px;height:19.100000000000023px"><span>Button <b>(D)</b></span></div>
<div class="a cl" style="left:409.7px;width:67.0px;top:339.4px;height:19.100000000000023px"><span>Beabull</span></div>
<div class="a cl" style="left:544.4px;width:67.10000000000002px;top:339.4px;height:19.100000000000023px"><span>5678</span></div>
<div class="a cl" style="left:611.5px;width:68.20000000000005px;top:339.4px;height:19.100000000000023px"><span>Test Lab ES</span></div>
<div class="a cl" style="left:679.7px;width:67.0px;top:339.4px;height:19.100000000000023px"><span>Spain</span></div>
<div class="a cl" style="left:746.7px;width:127.69999999999993px;top:339.4px;height:19.100000000000023px"><span>€105.00</span></div>
<div class="a cl" style="left:942.5px;width:67.0px;top:339.4px;height:19.100000000000023px"><span>27/04/2023 13:20:22</span></div>
<div class="a bdg" style="left:889.1500000000001px;top:343.09999999999997px;width:38.6px;height:13px;background:#356181;color:#fff">New Order</div>
<svg class="a" style="left:1107.3px;top:345.2px" width="8" height="8" viewBox="0 0 8 8"><path d="M0.6 0.6H7.3V4.9L4.9 7.3H0.6Z" fill="none" stroke="#505050" stroke-width="1"/></svg>
<div class="a act" style="left:1163px;top:343.09999999999997px;width:32.4px;height:13.2px;background:#efefef;color:#8a8a8a">Action <span class="car"></span></div>
<div class="a" style="left:35.15px;top:363.7px;width:7px;height:7px;background:#d0d0d0"></div>
<div class="a cl" style="left:72.3px;width:67.39999999999999px;top:358.5px;height:19.30000000000001px"><span>43951 <b>(I)</b></span></div>
<div class="a cl" style="left:139.7px;width:67.60000000000002px;top:358.5px;height:19.30000000000001px"><span>07/02/2023</span></div>
<div class="a cl" style="left:207.3px;width:67.19999999999999px;top:358.5px;height:19.30000000000001px"><span>Immunotherapy</span></div>
<div class="a cl" style="left:274.5px;width:68.19999999999999px;top:358.5px;height:19.30000000000001px"><span>Santana</span></div>
<div class="a cl" style="left:342.7px;width:67.0px;top:358.5px;height:19.30000000000001px"><span>Pedro <b>(D)</b></span></div>
<div class="a cl" style="left:544.4px;width:67.10000000000002px;top:358.5px;height:19.30000000000001px"><span>1234</span></div>
<div class="a cl" style="left:611.5px;width:68.20000000000005px;top:358.5px;height:19.30000000000001px"><span>Test Practice</span></div>
<div class="a cl" style="left:679.7px;width:67.0px;top:358.5px;height:19.30000000000001px"><span>Spain</span></div>
<div class="a cl" style="left:746.7px;width:127.69999999999993px;top:358.5px;height:19.30000000000001px"><span>€0.00</span></div>
<div class="a cl" style="left:942.5px;width:67.0px;top:358.5px;height:19.30000000000001px"><span>07/02/2023 17:12:14</span></div>
<div class="a bdg" style="left:889.1500000000001px;top:362.2px;width:38.6px;height:13px;background:#356181;color:#fff">New Order</div>
<svg class="a" style="left:1107.3px;top:364.3px" width="8" height="8" viewBox="0 0 8 8"><path d="M0.6 0.6H7.3V4.9L4.9 7.3H0.6Z" fill="none" stroke="#505050" stroke-width="1"/></svg>
<div class="a act" style="left:1163px;top:362.2px;width:32.4px;height:13.2px;background:#efefef;color:#8a8a8a">Action <span class="car"></span></div>
<!--/TABLE-->
<!--FOOT-->
<div class="a" style="left:4.8px;top:385.5px;font-size:7.45px;line-height:9px;color:#6a6a6a">Showing 1 to 10 of 13 entries</div>
<div class="a" style="left:4px;top:403.8px;width:1209px;height:1px;background:#eeeeee"></div>
<div class="a" style="left:1110.3px;top:382px;width:103px;height:18px;background:#f6f6f6;border:1px solid #e2e2e2;border-radius:3px"></div>
<div class="a" style="left:1191px;top:385.5px;font-size:7.6px;line-height:9px;color:#666">Next</div>
<div class="a" style="left:1186px;top:409.3px;width:22px;height:15.7px;border-radius:8px;background:#fb8084"></div>
<!--/FOOT-->
</div>
<!--MENU-->
<div class="a" style="left:1135.7px;top:345.4px;width:82.5px;height:130.5px;background:#fff;border:1px solid #eef0f2;border-radius:3px;box-shadow:0 1px 2px rgba(0,0,0,0.06)"></div>
<div class="a" style="left:1136.7px;top:348.7px;width:80.8px;height:14.3px;border-radius:7px;background:#dfe2e8"></div>
<svg class="a" style="left:1140.6px;top:351.2px" width="9" height="8.5" viewBox="0 0 9 8.5"><path d="M7.3 2.2A3.4 3.4 0 1 0 7.6 5.4" fill="none" stroke="#3b7fb5" stroke-width="1.2"/><path d="M8.2 0.2V3.4H5Z" fill="#3b7fb5"/></svg>
<div class="a mi" style="left:1153.8px;top:352.1px;color:#5d5f66">Repeat Order</div>
<svg class="a" style="left:1140.6px;top:366.8px" width="7.5" height="7" viewBox="0 0 7.5 7"><path d="M0 0.7H7.5M0 3.5H7.5M0 6.3H7.5" stroke="#3b7fb5" stroke-width="1.1"/></svg>
<div class="a mi" style="left:1153px;top:366.7px">Order Summary</div>
<svg class="a" style="left:1140.2px;top:380.4px" width="10" height="8.6" viewBox="0 0 10 8.6"><path d="M2.3 2A3.6 3.6 0 1 1 2.1 6.4" fill="none" stroke="#3b7fb5" stroke-width="1.1"/><path d="M0.3 0.6L3.4 0.6L3.4 3.4Z" fill="#3b7fb5"/><path d="M5.6 2.4V4.5L7 5.6" fill="none" stroke="#3b7fb5" stroke-width="0.9"/></svg>
<div class="a mi" style="left:1153.8px;top:380.6px">Order History</div>
<svg class="a" style="left:1140.6px;top:395.2px" width="9" height="8.6" viewBox="0 0 9 8.6"><circle cx="4.4" cy="4.3" r="3.7" fill="none" stroke="#5cb85c" stroke-width="1.1"/><path d="M2.5 4.3L3.9 5.7L6.4 3" fill="none" stroke="#5cb85c" stroke-width="1.1"/></svg>
<div class="a mi" style="left:1153.8px;top:395.3px">Preview NL Email</div>
<svg class="a" style="left:1140.6px;top:409.8px" width="8" height="8" viewBox="0 0 8 8"><rect x="0" y="0" width="7.6" height="7.6" rx="1" fill="#3b7fb5"/><rect x="1.3" y="2.6" width="5" height="3.2" fill="#fff"/><path d="M1.3 2.8L3.8 4.4L6.3 2.8" fill="none" stroke="#3b7fb5" stroke-width="0.5"/></svg>
<div class="a mi" style="left:1153px;top:410.0px">Re-send Order</div>
<div class="a mi" style="left:1141.2px;top:418.0px;letter-spacing:0.12px">Confirmation to customer</div>
<svg class="a" style="left:1140.6px;top:431.4px" width="9" height="8.6" viewBox="0 0 9 8.6"><circle cx="4.4" cy="4.3" r="4.2" fill="#3b7fb5"/><path d="M2.2 4.3H6.6M4.4 2.1V6.5" stroke="#fff" stroke-width="1.2"/></svg>
<div class="a mi" style="left:1153.8px;top:431.8px">Add Batch Number</div>
<svg class="a" style="left:1140.6px;top:445.8px" width="9" height="8.5" viewBox="0 0 9 8.5"><path d="M0.3 8.2L0.8 6L6.4 0.4L8.4 2.4L2.8 8Z" fill="#3b7fb5"/><path d="M5.6 1.2L7.6 3.2" stroke="#fff" stroke-width="0.5"/></svg>
<div class="a mi" style="left:1153.8px;top:446.5px">Edit Order Form</div>
<svg class="a" style="left:1140.6px;top:461.4px" width="6" height="6.4" viewBox="0 0 6 6.4"><path d="M0.6 0.6L5.4 5.8M5.4 0.6L0.6 5.8" stroke="#3b7fb5" stroke-width="1.1"/></svg>
<div class="a mi" style="left:1150.9px;top:461.8px">Cancel Order</div>
<!--/MENU-->
</body></html>
